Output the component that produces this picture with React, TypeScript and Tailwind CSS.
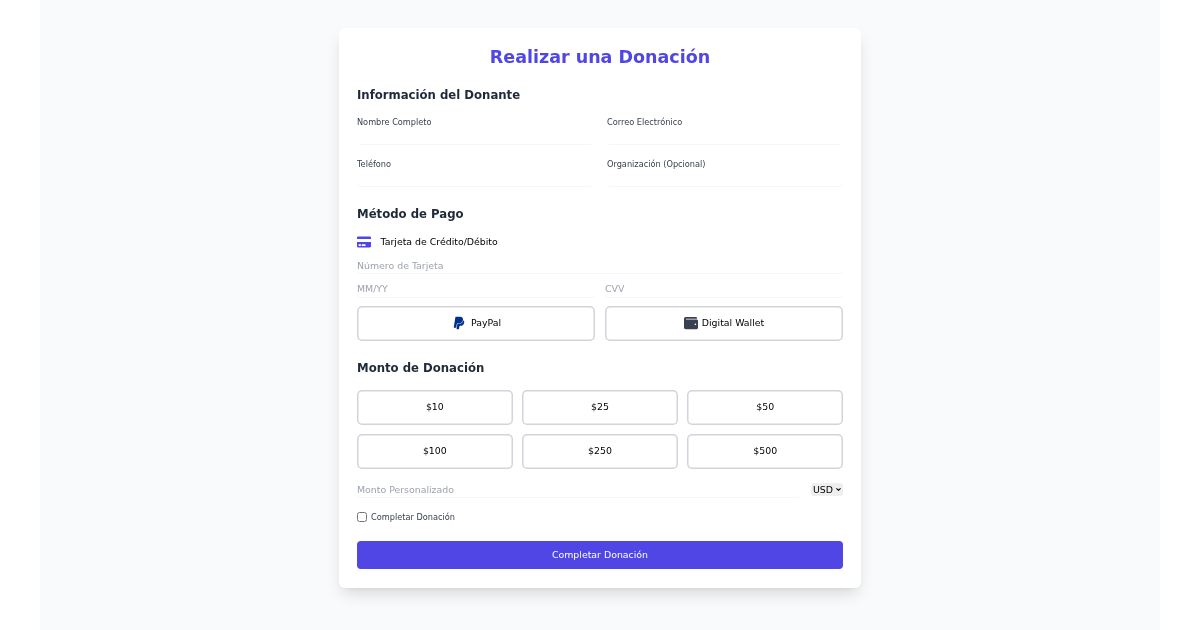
import { FaCreditCard, FaPaypal, FaWallet } from 'react-icons/fa'
import { ChevronDown } from 'lucide-react'

const font = { fontFamily: '"DejaVu Sans", sans-serif' }

function Field({ label }: { label: string }) {
  return (
    <div className="flex flex-col">
      <label className="h-[12px] text-[8.2px] leading-[12px] text-[#374151]">{label}</label>
      <input className="mt-[4px] h-[13px] w-full rounded-[4px] border-b border-[#f6f6f8] outline-none" />
    </div>
  )
}

function Amount({ value }: { value: string }) {
  return (
    <button className="h-[35px] rounded-[5px] bg-white text-[9.4px] text-black shadow-[inset_0_0_0_1.5px_#d1d5db]">
      {value}
    </button>
  )
}

export default function App() {
  return (
    <div className="h-[630px] overflow-hidden bg-white px-[40px]" style={font}>
      <div className="h-full bg-[#f9fafb] pt-[28px]">
        <div className="mx-auto h-[560px] w-[522px] rounded-[6px] bg-white px-[18px] pt-[18px] shadow-[0_8px_16px_-3px_rgba(0,0,0,0.14),0_3px_6px_-4px_rgba(0,0,0,0.1)] will-change-transform">
          <h1 className="h-[22px] text-center text-[17.5px] leading-[22px] font-bold text-[#4f46e5]">Realizar una Donación</h1>

          <h2 className="mt-[19px] h-[16px] text-[11.7px] leading-[16px] font-bold text-[#1f2937]">Información del Donante</h2>
          <div className="mt-[13px] grid grid-cols-2 gap-x-[14px] gap-y-[13px]">
            <Field label="Nombre Completo" />
            <Field label="Correo Electrónico" />
            <Field label="Teléfono" />
            <Field label="Organización (Opcional)" />
          </div>

          <h2 className="mt-[19px] h-[16px] text-[11.7px] leading-[16px] font-bold text-[#1f2937]">Método de Pago</h2>
          <div className="mt-[13px] flex h-[14px] items-center gap-[9.5px]">
            <FaCreditCard className="h-[14px] w-[14px] text-[#4f46e5]" />
            <span className="text-[9.4px] text-black">Tarjeta de Crédito/Débito</span>
          </div>
          <input
            placeholder="Número de Tarjeta"
            className="mt-[6px] h-[19px] w-full rounded-[4px] border-b border-[#f6f6f8] pt-[2px] text-[9.4px] outline-none placeholder:text-[#9ca3af]"
          />
          <div className="mt-[4px] grid grid-cols-2 gap-x-[10px]">
            <input placeholder="MM/YY" className="h-[18px] w-full rounded-[4px] border-b border-[#f6f6f8] text-[9.4px] outline-none placeholder:text-[#9ca3af]" />
            <input placeholder="CVV" className="h-[18px] w-full rounded-[4px] border-b border-[#f6f6f8] text-[9.4px] outline-none placeholder:text-[#9ca3af]" />
          </div>
          <div className="mt-[8px] grid grid-cols-2 gap-x-[10px]">
            <button className="flex h-[35px] items-center justify-center gap-[6px] rounded-[5px] bg-white pl-[2px] text-[9.4px] text-black shadow-[inset_0_0_0_1.5px_#d1d5db]">
              <FaPaypal className="h-[14px] w-[12px] text-[#003087]" />
              PayPal
            </button>
            <button className="flex h-[35px] items-center justify-center gap-[4px] rounded-[5px] bg-white text-[9.4px] text-black shadow-[inset_0_0_0_1.5px_#d1d5db]">
              <FaWallet className="h-[14px] w-[14px] text-[#374151]" />
              Digital Wallet
            </button>
          </div>

          <h2 className="mt-[19px] h-[16px] text-[11.7px] leading-[16px] font-bold text-[#1f2937]">Monto de Donación</h2>
          <div className="mt-[14px] grid grid-cols-3 gap-x-[9.5px] gap-y-[9px]">
            <Amount value="$10" />
            <Amount value="$25" />
            <Amount value="$50" />
            <Amount value="$100" />
            <Amount value="$250" />
            <Amount value="$500" />
          </div>
          <div className="mt-[12px] flex items-center gap-[10px]">
            <input
              placeholder="Monto Personalizado"
              className="h-[17px] min-w-0 flex-1 rounded-[4px] border-b border-[#f6f6f8] pt-[1px] text-[9.4px] outline-none placeholder:text-[#9ca3af]"
            />
            <div className="relative mt-[1px] h-[13px] w-[32px]">
              <select className="block h-[13px] w-[32px] appearance-none rounded-[3px] bg-[#efefef] pl-[2px] text-[9.4px] leading-[13px] text-black outline-none">
                <option>USD</option>
              </select>
              <ChevronDown strokeWidth={3.5} className="pointer-events-none absolute top-[3px] right-[1.5px] h-[7px] w-[7px] text-black" />
            </div>
          </div>
          <label className="mt-[12px] flex h-[14px] items-center gap-[4px]">
            <input type="checkbox" className="m-0 h-[10px] w-[10px] appearance-auto" />
            <span className="pt-[1px] text-[8.2px] text-[#374151]">Completar Donación</span>
          </label>
          <button className="mt-[17px] h-[28px] w-full rounded-[4px] bg-[#4f46e5] pt-[1px] text-[9.4px] text-white">Completar Donación</button>
        </div>
      </div>
    </div>
  )
}
